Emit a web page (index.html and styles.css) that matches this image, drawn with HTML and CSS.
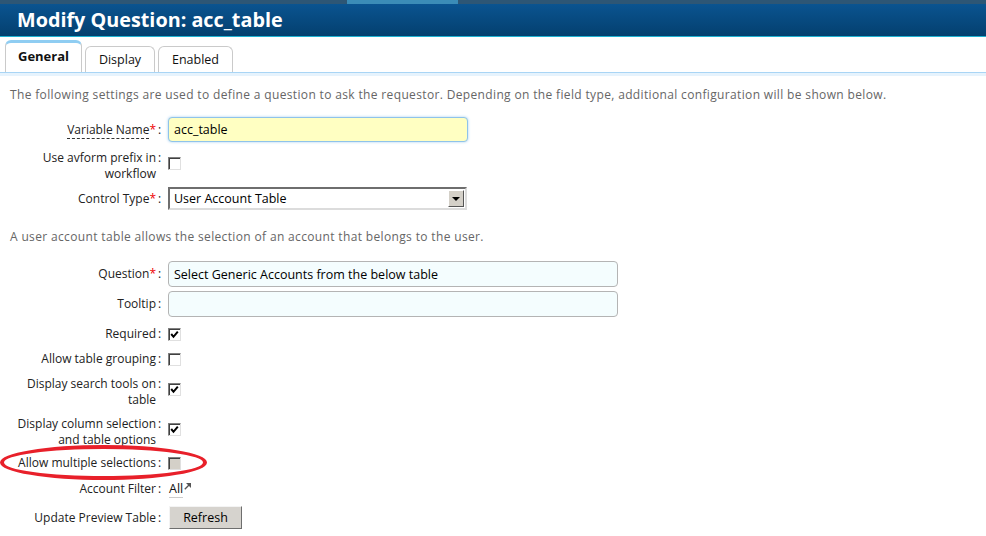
FILE: index.html
```html
<!DOCTYPE html>
<html>
<head>
<meta charset="utf-8">
<title>Modify Question</title>
<link rel="stylesheet" href="styles.css">
</head>
<body>
<header class="titlebar">
  <div class="topstrip"><span class="seg"></span></div>
  <h1>Modify Question: acc_table</h1>
</header>
<nav class="tabs">
  <div class="tab active">General</div>
  <div class="tab t-display">Display</div>
  <div class="tab t-enabled">Enabled</div>
</nav>
<main class="main">
  <p class="desc">The following settings are used to define a question to ask the requestor. Depending on the field type, additional configuration will be shown below.</p>
  <div class="form">
    <div class="row center r-var">
      <div class="label"><span class="lt"><span class="dashed">Variable Name</span><span class="req">*</span></span><span class="colon">:</span></div>
      <div class="field"><input class="txt yellow" type="text" value="acc_table"></div>
    </div>
    <div class="row two r-8">
      <div class="label"><span class="lt">Use avform prefix in workflow</span><span class="colon">:</span></div>
      <div class="field"><span class="cb"></span></div>
    </div>
    <div class="row center r-5">
      <div class="label"><span class="lt">Control Type<span class="req">*</span></span><span class="colon">:</span></div>
      <div class="field">
        <div class="select"><span class="sel-text">User Account Table</span><span class="sel-btn"><span class="tri"></span></span></div>
      </div>
    </div>
  </div>
  <p class="desc desc2">A user account table allows the selection of an account that belongs to the user.</p>
  <div class="form form2">
    <div class="row center r-q">
      <div class="label"><span class="lt">Question<span class="req">*</span></span><span class="colon">:</span></div>
      <div class="field"><input class="txt cyan" type="text" value="Select Generic Accounts from the below table"></div>
    </div>
    <div class="row center r-4">
      <div class="label"><span class="lt">Tooltip</span><span class="colon">:</span></div>
      <div class="field"><input class="txt cyan" type="text" value=""></div>
    </div>
    <div class="row r-9">
      <div class="label"><span class="lt">Required</span><span class="colon">:</span></div>
      <div class="field"><span class="cb"><svg viewBox="0 0 9 9" width="9" height="9"><path d="M1.2 4 L3.5 6.8 L7.8 1.6" fill="none" stroke="#000" stroke-width="2"/></svg></span></div>
    </div>
    <div class="row r-9">
      <div class="label"><span class="lt">Allow table grouping</span><span class="colon">:</span></div>
      <div class="field"><span class="cb"></span></div>
    </div>
    <div class="row two r-9">
      <div class="label"><span class="lt">Display search tools on table</span><span class="colon">:</span></div>
      <div class="field"><span class="cb"><svg viewBox="0 0 9 9" width="9" height="9"><path d="M1.2 4 L3.5 6.8 L7.8 1.6" fill="none" stroke="#000" stroke-width="2"/></svg></span></div>
    </div>
    <div class="row two r-8">
      <div class="label"><span class="lt">Display column selection and table options</span><span class="colon">:</span></div>
      <div class="field"><span class="cb"><svg viewBox="0 0 9 9" width="9" height="9"><path d="M1.2 4 L3.5 6.8 L7.8 1.6" fill="none" stroke="#000" stroke-width="2"/></svg></span></div>
    </div>
    <div class="row r-7">
      <div class="label"><span class="lt">Allow multiple selections</span><span class="colon">:</span></div>
      <div class="field"><span class="cb disabled"></span></div>
    </div>
    <div class="row r-10">
      <div class="label"><span class="lt">Account Filter</span><span class="colon">:</span></div>
      <div class="field"><span class="all">All</span><svg class="ext" viewBox="0 0 7 7" width="7" height="7"><path d="M0.8 6.2 L5 2" stroke="#555" stroke-width="1.3"/><polygon points="2,0 7,0 7,5" fill="#555"/></svg></div>
    </div>
    <div class="row center r-8">
      <div class="label"><span class="lt">Update Preview Table</span><span class="colon">:</span></div>
      <div class="field"><button class="btn" type="button">Refresh</button></div>
    </div>
  </div>
</main>
<div class="ellipse"></div>
</body>
</html>
```
FILE: styles.css
```css
html, body {
  margin: 0;
  padding: 0;
}
body {
  font-family: "Open Sans", "Liberation Sans", Arial, sans-serif;
  font-size: 12px;
  line-height: 16px;
  color: #222;
  background: #fff;
  position: relative;
  width: 986px;
  height: 536px;
  overflow: hidden;
}
.titlebar {
  height: 36px;
  background: linear-gradient(#0b5694, #04406f);
  border-bottom: 1px solid #1fb2d2;
}
.topstrip {
  height: 4px;
  background: #2d5675;
  display: flex;
}
.topstrip .seg {
  margin-left: 347px;
  width: 111px;
  background: #3b8cb7;
}
.titlebar h1 {
  margin: 0;
  padding-left: 17px;
  height: 32px;
  line-height: 32px;
  font-size: 19.8px;
  font-weight: bold;
  color: #fff;
}
.tabs {
  display: flex;
  align-items: flex-end;
  height: 35px;
  padding-left: 5px;
  gap: 3px;
  border-bottom: 1px solid #a9d5f5;
  box-shadow: 0 3px 0 #e6f3fd;
}
.tab {
  box-sizing: border-box;
  border: 1px solid #cacaca;
  border-bottom: none;
  border-radius: 6px 6px 0 0;
  height: 26px;
  line-height: 25px;
  text-align: center;
  color: #111;
  background: #fff;
  font-size: 12.5px;
}
.tab.active {
  width: 77px;
  height: 32px;
  border-top: 3px solid #8fcdf2;
  line-height: 26px;
  padding-bottom: 3px;
  font-weight: bold;
  font-size: 13px;
}
.t-display { width: 70px; }
.t-enabled { width: 75px; }
.main {
  padding: 0 10px;
}
.desc {
  margin: 14px 0 0;
  color: #666;
  letter-spacing: 0.35px;
}
.desc2 {
  margin-top: 19px;
}
.form {
  margin-top: 14px;
}
.form2 {
  margin-top: 16px;
}
.row {
  display: flex;
  align-items: flex-start;
}
.row.center {
  align-items: center;
}
.r-4 { margin-top: 4px; }
.r-5 { margin-top: 5px; }
.r-7 { margin-top: 7px; }
.r-8 { margin-top: 8px; }
.r-9 { margin-top: 9px; }
.r-10 { margin-top: 10px; }
.label {
  width: 153px;
  display: flex;
  justify-content: flex-end;
  flex: none;
}
.lt {
  max-width: 146px;
  text-align: right;
}
.colon {
  width: 5px;
  padding-left: 2px;
  text-align: left;
  align-self: flex-start;
}
.req {
  color: #e00;
}
.dashed {
  border-bottom: 1px dashed #333;
}
.field {
  margin-left: 5px;
  display: flex;
  align-items: center;
}
.txt {
  box-sizing: border-box;
  font-family: inherit;
  font-size: 12.5px;
  color: #000;
  padding: 0 5px;
  margin: 0;
  border-radius: 4px;
  outline: none;
}
.yellow {
  width: 300px;
  height: 25px;
  background: #ffffc2;
  border: 1px solid #8fc3ea;
  box-shadow: 0 0 3px #a7d0f0;
}
.cyan {
  width: 450px;
  height: 26px;
  background: #f4fdfe;
  border: 1px solid #b4b4b4;
}
.select {
  box-sizing: border-box;
  width: 299px;
  height: 23px;
  display: flex;
  align-items: center;
  border: 2px solid;
  border-color: #6e6e6e #dcdcdc #dcdcdc #6e6e6e;
  background: #fff;
  font-size: 12.5px;
}
.sel-text {
  flex: 1;
  padding-left: 4px;
  color: #000;
}
.sel-btn {
  box-sizing: border-box;
  width: 16px;
  height: 17px;
  margin-right: 1px;
  background: #d4d0c8;
  border: 1px solid;
  border-color: #fff #555 #555 #fff;
  display: flex;
  align-items: center;
  justify-content: center;
}
.tri {
  width: 0;
  height: 0;
  border-left: 4px solid transparent;
  border-right: 4px solid transparent;
  border-top: 4px solid #000;
}
.cb {
  box-sizing: border-box;
  width: 13px;
  height: 13px;
  border: 1px solid;
  border-color: #808080 #e0e0e0 #e0e0e0 #808080;
  box-shadow: inset 1px 1px 0 #404040;
  background: #fff;
  display: flex;
  align-items: center;
  justify-content: center;
  margin-top: 2px;
}
.row.two .cb {
  margin-top: 7px;
}
.cb.disabled {
  background: #d4d0c8;
}
.all {
  color: #111;
  border-bottom: 1px solid #ccc;
  margin-left: 1px;
  font-size: 12.5px;
}
.ext {
  margin-left: 1px;
  align-self: flex-start;
  margin-top: 2px;
}
.btn {
  box-sizing: border-box;
  width: 73px;
  height: 23px;
  margin: 0 0 0 1px;
  padding: 0;
  font-family: inherit;
  font-size: 12.5px;
  color: #000;
  background: #d6d3ce;
  border: 1px solid;
  border-color: #f4f4f4 #6e6e6e #6e6e6e #f4f4f4;
}
.ellipse {
  position: absolute;
  left: 0;
  top: 445px;
  width: 207px;
  height: 35px;
  box-sizing: border-box;
  border: 4px solid #e8202a;
  border-radius: 50%;
}
```
